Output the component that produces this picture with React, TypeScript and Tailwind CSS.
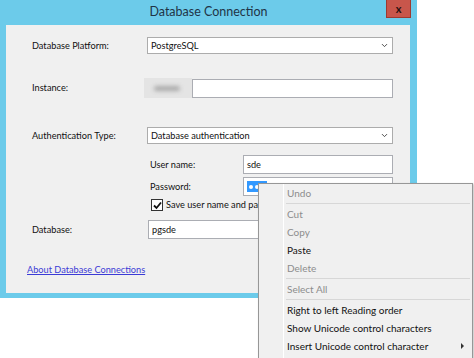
import {ChevronDown} from "lucide-react";

const font = {fontFamily: 'Lato, "Liberation Sans", sans-serif'};

function Combo({value, width}: {value: string; width: string}) {
    return (
        <div className={`flex items-center justify-between h-[17px] ${width} bg-white border border-[#acacac] pl-[3px] pr-[3px]`}>
            <span className="text-[9.2px] text-[#111] leading-none">{value}</span>
            <ChevronDown size={9} strokeWidth={2.5} className="text-[#444]"/>
        </div>
    );
}

function Field({value, width, children}: {value?: string; width: string; children?: React.ReactNode}) {
    return (
        <div className={`flex items-center h-[19px] ${width} bg-white border border-[#abadb3] pl-[3px]`}>
            {children ?? <span className="text-[9.2px] text-[#111] leading-none">{value}</span>}
        </div>
    );
}

function MenuItem({label, enabled = false, arrow = false}: {label: string; enabled?: boolean; arrow?: boolean}) {
    return (
        <div className="flex items-center h-[18px] pl-[28px] pr-[8px]">
            <span className={`flex-1 text-[10px] leading-none ${enabled ? "text-[#111]" : "text-[#8d8d8d]"}`}>{label}</span>
            {arrow && <span className="w-0 h-0 border-y-[3px] border-y-transparent border-l-[3px] border-l-[#333]"/>}
        </div>
    );
}

function MenuSeparator() {
    return (
        <div className="flex items-center h-[3px] ml-[27px] mr-[2px]">
            <div className="flex-1 h-px bg-[#d7d7d7]"/>
        </div>
    );
}

export default function App() {
    return (
        <div className="relative w-[474px] h-[358px] bg-white overflow-hidden" style={font}>
            <div className="flex flex-col w-[417px] h-[298px] bg-[#6ccbea]">
                <div className="relative flex items-center justify-center h-[25px]">
                    <span className="text-[12.5px] text-[#1f3447]">Database Connection</span>
                    <div className="absolute right-[6px] top-0 flex items-center justify-center w-[25px] h-[18px] bg-[#c8564b] border border-[#9d3a31] border-t-0">
                        <span className="text-[11px] font-bold text-[#2a1010] leading-none">x</span>
                    </div>
                </div>
                <div className="flex flex-col ml-[6px] mr-[7px] h-[268px] bg-[#f0f0f0] pt-[12px]">
                    <div className="flex items-center">
                        <span className="w-[141px] pl-[26px] text-[9.2px] text-[#111]">Database Platform:</span>
                        <Combo value="PostgreSQL" width="w-[246px]"/>
                    </div>
                    <div className="flex items-center mt-[24px]">
                        <span className="w-[138px] pl-[26px] text-[9.2px] text-[#111]">Instance:</span>
                        <div className="flex items-center h-[20px] w-[48px] bg-[#e4e4e4]">
                            <span className="ml-[10px] w-[26px] h-[5px] rounded-full bg-[#a9a9a9] blur-[2px]"/>
                        </div>
                        <Field width="w-[201px]"><span/></Field>
                    </div>
                    <div className="flex items-center mt-[29px]">
                        <span className="w-[141px] pl-[26px] text-[9.2px] text-[#111]">Authentication Type:</span>
                        <Combo value="Database authentication" width="w-[246px]"/>
                    </div>
                    <div className="flex flex-col ml-[144px] mt-[11px] gap-[3px]">
                        <div className="flex items-center">
                            <span className="w-[93px] text-[9.2px] text-[#111]">User name:</span>
                            <Field value="sde" width="w-[150px]"/>
                        </div>
                        <div className="flex items-center">
                            <span className="w-[93px] text-[9.2px] text-[#111]">Password:</span>
                            <Field width="w-[150px]">
                                <span className="flex items-center gap-[2px] h-[11px] px-[2px] bg-[#3399ff]">
                                    <span className="w-[4px] h-[4px] rounded-full bg-white"/>
                                    <span className="w-[4px] h-[4px] rounded-full bg-white"/>
                                    <span className="w-[4px] h-[4px] rounded-full bg-white"/>
                                </span>
                            </Field>
                        </div>
                        <div className="flex items-center h-[12px] gap-[3px] ml-[1px]">
                            <span className="flex items-center justify-center w-[12px] h-[12px] bg-white border border-[#333]">
                                <svg width="9" height="9" viewBox="0 0 9 9">
                                    <path d="M1 4.5 L3.5 7 L8 1.5" fill="none" stroke="#111" strokeWidth="1.8"/>
                                </svg>
                            </span>
                            <span className="text-[9.2px] text-[#111] leading-none">Save user name and password</span>
                        </div>
                    </div>
                    <div className="flex items-center mt-[9px]">
                        <span className="w-[142px] pl-[26px] text-[9.2px] text-[#111]">Database:</span>
                        <Field value="pgsde" width="w-[245px]"/>
                    </div>
                    <a href="#" className="mt-[26px] ml-[21px] text-[9.2px] leading-none text-[#3b3bd6] underline">About Database Connections</a>
                </div>
            </div>
            <div className="absolute left-[258px] top-[183px] w-[215px] h-[176px] bg-[#f0f0f0] border border-[#979797] shadow-[1px_1px_2px_rgba(0,0,0,0.25)]">
                <div className="absolute left-[24px] top-0 bottom-0 w-px bg-[#e2e2e2] border-r border-white"/>
                <MenuItem label="Undo"/>
                <MenuSeparator/>
                <MenuItem label="Cut"/>
                <MenuItem label="Copy"/>
                <MenuItem label="Paste" enabled/>
                <MenuItem label="Delete"/>
                <MenuSeparator/>
                <MenuItem label="Select All"/>
                <MenuSeparator/>
                <MenuItem label="Right to left Reading order" enabled/>
                <MenuItem label="Show Unicode control characters" enabled/>
                <MenuItem label="Insert Unicode control character" enabled arrow/>
            </div>
        </div>
    );
}
